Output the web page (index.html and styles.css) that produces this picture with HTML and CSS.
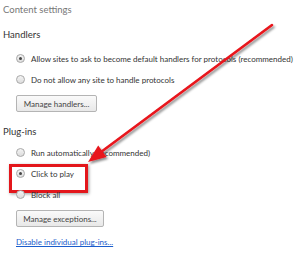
FILE: index.html
```html
<!DOCTYPE html>
<html lang="en">
<head>
  <meta charset="UTF-8" />
  <title>Content settings</title>
  <link rel="stylesheet" href="styles.css">
</head>
<body>
  <div class="page">
    <h1 class="page-title">Content settings</h1>

    <!-- Handlers -->
    <h2 class="section-title">Handlers</h2>
    <div class="section-body">
      <div class="radio-row"><span class="radio checked"></span><span>Allow sites to ask to become default handlers for protocols (recommended)</span></div>
      <div class="radio-row"><span class="radio"></span><span>Do not allow any site to handle protocols</span></div>
      <button class="btn btn-handlers">Manage handlers...</button>
    </div>

    <!-- Plug-ins -->
    <h2 class="section-title plugins">Plug-ins</h2>
    <div class="section-body">
      <div class="radio-row"><span class="radio"></span><span>Run automatically (recommended)</span></div>
      <div class="radio-row highlight"><span class="radio checked"></span><span>Click to play</span></div>
      <div class="radio-row"><span class="radio"></span><span>Block all</span></div>
      <button class="btn btn-exceptions">Manage exceptions...</button>
      <a class="link" href="#">Disable individual plug-ins...</a>
    </div>
  </div>

  <svg class="arrow" width="300" height="254" viewBox="0 0 300 254">
    <defs>
      <filter id="shadow" x="-10%" y="-10%" width="130%" height="130%">
        <feDropShadow dx="1.5" dy="2" stdDeviation="1.2" flood-color="#000" flood-opacity="0.45"/>
      </filter>
    </defs>
    <g filter="url(#shadow)">
      <line x1="272" y1="25" x2="101" y2="152" stroke="#e8141b" stroke-width="2.6" stroke-linecap="round"/>
      <polygon points="88,162 98.2,145.6 106.6,156.9" fill="#e8141b"/>
    </g>
  </svg>
</body>
</html>
```

FILE: styles.css
```css
* {
  margin: 0;
  padding: 0;
  box-sizing: border-box;
}

body {
  font-family: Lato, "Open Sans", sans-serif;
  font-size: 8px;
  color: #333;
  background: #fff;
  width: 300px;
  height: 254px;
  overflow: hidden;
  position: relative;
}

.page {
  padding-left: 3px;
}

.page-title {
  font-size: 9.5px;
  font-weight: normal;
  color: #777;
  line-height: 20px;
  height: 20px;
}

.section-title {
  font-size: 9.5px;
  font-weight: normal;
  color: #333;
  line-height: 20px;
  height: 20px;
  margin-top: 5px;
}
.section-title.plugins {
  margin-top: 10px;
}

.section-body {
  padding-left: 13px;
  display: flex;
  flex-direction: column;
  align-items: flex-start;
}
.section-title + .section-body {
  margin-top: 3px;
}
.section-title.plugins + .section-body {
  margin-top: 0;
}

.radio-row {
  position: relative;
  display: flex;
  align-items: center;
  gap: 6px;
  height: 21px;
  white-space: nowrap;
}

.radio {
  width: 9px;
  height: 9px;
  border-radius: 50%;
  border: 1px solid #a8a8a8;
  background: linear-gradient(#f4f4f4, #dcdcdc);
  display: flex;
  align-items: center;
  justify-content: center;
  flex-shrink: 0;
}
.radio.checked::before {
  content: '';
  width: 3px;
  height: 3px;
  border-radius: 50%;
  background: #444;
}

/* red annotation box */
.highlight::after {
  content: '';
  position: absolute;
  left: -7px;
  top: 1px;
  width: 73px;
  height: 23px;
  border: 3px solid #e3161b;
  box-shadow: 1px 1px 3px rgba(0,0,0,0.4);
}

.btn {
  font-family: inherit;
  font-size: 8px;
  color: #444;
  height: 17px;
  padding: 0 6px;
  border: 1px solid #b4b4b4;
  border-radius: 2px;
  background: linear-gradient(#fafafa, #e8e8e8);
  margin-top: 5px;
  white-space: nowrap;
}
.btn-handlers {
  width: 81px;
}
.btn-exceptions {
  width: 88px;
}

.link {
  color: #1a5dcc;
  text-decoration: underline;
  line-height: 14px;
  margin-top: 8px;
  white-space: nowrap;
}

.arrow {
  position: absolute;
  top: 0;
  left: 0;
  pointer-events: none;
}
```
